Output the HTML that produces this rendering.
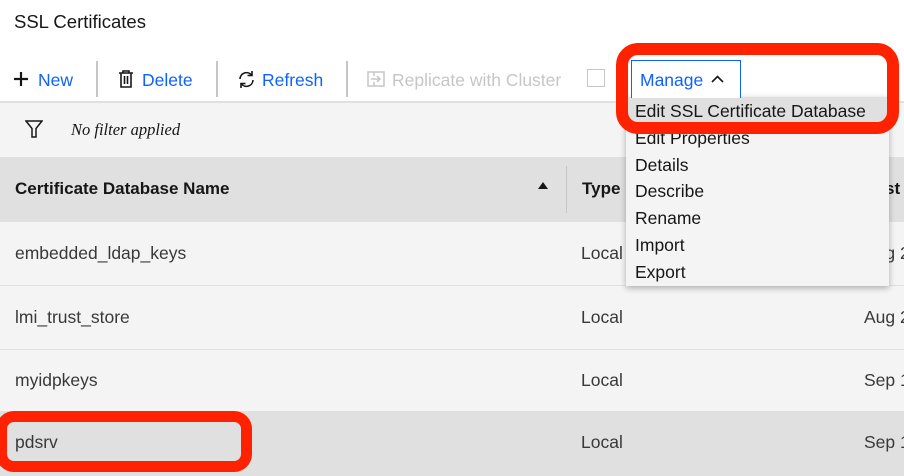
<!DOCTYPE html>
<html><head><style>
*{margin:0;padding:0;box-sizing:border-box}
body{width:904px;height:476px;overflow:hidden;background:#fff;font-family:"Liberation Sans",sans-serif;position:relative;color:#161616}
.a{position:absolute;white-space:nowrap}
.t{font-size:17.5px;color:#161616}
.blue{color:#0f62fe}
.dv{position:absolute;width:2px;background:#c6c6c6;top:61px;height:36px}
.row{position:absolute;left:0;width:904px;height:64px;background:#f4f4f4;border-bottom:1px solid #e0e0e0;overflow:hidden}
.row span{position:absolute;top:22px;font-size:17.5px;color:#393939;white-space:nowrap}
.mi{position:absolute;left:9px;font-size:17.5px;color:#161616;white-space:nowrap}
</style></head><body>
<div class="a t" style="left:14px;top:11px;font-size:18.5px">SSL Certificates</div>

<div class="a" style="left:0;top:101px;width:904px;height:2px;background:#e0e0e0"></div>
<svg class="a" style="left:14px;top:72px" width="14" height="14"><path d="M7 0v14M0 7h14" stroke="#161616" stroke-width="2.2"/></svg>
<div class="a t blue" style="left:38px;top:70px">New</div>
<div class="dv" style="left:96px"></div>
<svg class="a" style="left:118px;top:70px" width="16" height="18" fill="none" stroke="#161616" stroke-width="1.6"><path d="M1 3h14M5 3V1h6v2M3 3v14h10V3M6.5 6v8M9.5 6v8"/></svg>
<div class="a t blue" style="left:142px;top:70px">Delete</div>
<div class="dv" style="left:216px"></div>
<svg class="a" style="left:237px;top:70px" width="19" height="19" fill="none" stroke="#161616" stroke-width="1.6"><path d="M3 9a6.5 6.5 0 0 1 11.5-4M16 10a6.5 6.5 0 0 1-11.5 4"/><path d="M15 1v4.5h-4.5M4 18v-4.5h4.5"/></svg>
<div class="a t blue" style="left:262px;top:70px">Refresh</div>
<div class="dv" style="left:346px"></div>
<svg class="a" style="left:367px;top:71px" width="18" height="16" fill="none" stroke="#c6c6c6" stroke-width="1.5"><rect x="1" y="1" width="16" height="14"/><path d="M7 1v4M7 11v4M4 8h8M10 5l3 3-3 3"/></svg>
<div class="a t" style="left:392px;top:70px;color:#c6c6c6">Replicate with Cluster</div>
<div class="a" style="left:587px;top:69px;width:18px;height:18px;border:1.5px solid #c6c6c6"></div>
<div class="dv" style="left:616px;top:66px;height:30px"></div>

<div class="a" style="left:0;top:103px;width:904px;height:54px;background:#f4f4f4"></div>
<svg class="a" style="left:25px;top:120px" width="18" height="18" fill="none" stroke="#161616" stroke-width="1.5"><path d="M1 1h16l-6 7.5V17H7V8.5z"/></svg>
<div class="a" style="left:71px;top:120px;font-family:'Liberation Serif',serif;font-style:italic;font-size:16.5px">No filter applied</div>

<div class="a" style="left:0;top:157px;width:904px;height:65px;background:#e0e0e0"></div>
<div class="a" style="left:15px;top:179px;font-size:17px;font-weight:bold">Certificate Database Name</div>
<svg class="a" style="left:538px;top:182px" width="10" height="7"><path d="M0 7L5 0L10 7z" fill="#161616"/></svg>
<div class="a" style="left:566px;top:166px;width:1px;height:47px;background:#c6c6c6"></div>
<div class="a" style="left:582px;top:179px;font-size:17px;font-weight:bold">Type</div>
<div class="a" style="left:885px;top:179px;font-size:17px;font-weight:bold">st</div>

<div class="row" style="top:222px"><span style="left:15px;top:21px">embedded_ldap_keys</span><span style="left:581px;top:21px">Local</span><span style="left:864px;top:21px">Aug 2</span></div>
<div class="row" style="top:286px"><span style="left:15px;top:21px">lmi_trust_store</span><span style="left:581px;top:21px">Local</span><span style="left:864px;top:21px">Aug 2</span></div>
<div class="row" style="top:350px;height:62px"><span style="left:15px;top:20px">myidpkeys</span><span style="left:581px;top:20px">Local</span><span style="left:864px;top:20px">Sep 1</span></div>
<div class="row" style="top:412px;background:#e0e0e0"><span style="left:15px;top:20px">pdsrv</span><span style="left:581px;top:20px">Local</span><span style="left:864px;top:20px">Sep 1</span></div>

<div class="a" style="left:626px;top:97px;width:263px;height:189px;background:#f4f4f4;box-shadow:0 2px 6px rgba(0,0,0,.3)">
<div style="position:absolute;left:0;top:0;width:263px;height:27px;background:#e0e0e0"></div>
<div class="mi" style="top:4px">Edit SSL Certificate Database</div>
<div class="mi" style="top:31px">Edit Properties</div>
<div class="mi" style="top:58px">Details</div>
<div class="mi" style="top:84px">Describe</div>
<div class="mi" style="top:111px">Rename</div>
<div class="mi" style="top:138px">Import</div>
<div class="mi" style="top:165px">Export</div>
</div>
<div class="a" style="left:631px;top:60px;width:110px;height:38px;border:1px solid #0f62fe;border-bottom:none;background:#fff"></div>
<div class="a t blue" style="left:640px;top:70px">Manage</div>
<svg class="a" style="left:711px;top:75px" width="13" height="8" fill="none" stroke="#161616" stroke-width="1.6"><path d="M1 7L6.5 1.5L12 7"/></svg>

<div class="a" style="left:616px;top:43px;width:283px;height:91px;border:12px solid #ff2200;border-radius:22px"></div>
<div class="a" style="left:-4px;top:411px;width:256px;height:61px;border:11px solid #ff2200;border-radius:18px"></div>
</body></html>
